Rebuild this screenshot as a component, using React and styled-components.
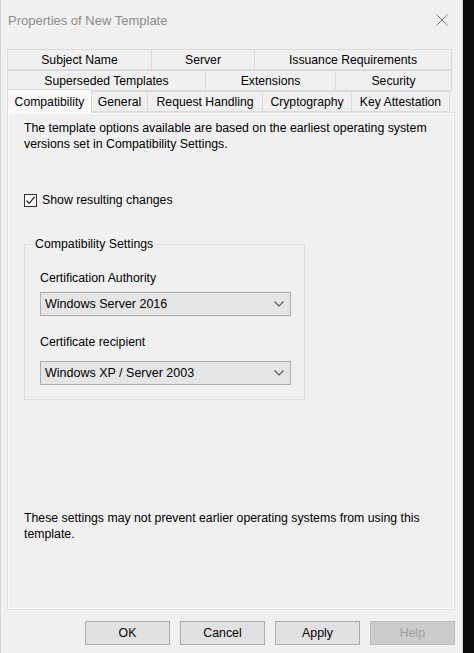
import React from 'react';
import styled, { createGlobalStyle } from 'styled-components';

const GlobalStyle = createGlobalStyle`
  html, body {
    margin: 0;
    padding: 0;
    background: #0b0b0b;
  }
  body {
    font-family: "Liberation Sans", Arial, sans-serif;
    font-size: 12px;
    color: #000;
  }
`;

const tabRows = [
  [
    { label: 'Subject Name', width: 145 },
    { label: 'Server', width: 104 },
    { label: 'Issuance Requirements', width: 198 },
  ],
  [
    { label: 'Superseded Templates', width: 199 },
    { label: 'Extensions', width: 131 },
    { label: 'Security', width: 117 },
  ],
  [
    { label: 'Compatibility', width: 85, active: true },
    { label: 'General', width: 57 },
    { label: 'Request Handling', width: 116 },
    { label: 'Cryptography', width: 90 },
    { label: 'Key Attestation', width: 99 },
  ],
];

const App = () => {
  return (
    <>
      <GlobalStyle />
      <Window>
        <TitleBar>
          <Title>Properties of New Template</Title>
          <CloseButton aria-label="Close">
            <svg width="12" height="12" viewBox="0 0 12 12">
              <path d="M0.5 0.5 L11.5 11.5 M11.5 0.5 L0.5 11.5" stroke="#7a7a7a" strokeWidth="1" fill="none" />
            </svg>
          </CloseButton>
        </TitleBar>

        <Body>
          <TabStrip>
            {tabRows.map((row, i) => (
              <TabRow key={i}>
                {row.map((tab) => (
                  <Tab key={tab.label} $width={tab.width} $active={tab.active}>
                    {tab.label}
                  </Tab>
                ))}
              </TabRow>
            ))}
          </TabStrip>

          <Panel>
            <Paragraph>
              The template options available are based on the earliest operating system
              <br />
              versions set in Compatibility Settings.
            </Paragraph>

            <CheckRow>
              <CheckBox>
                <svg width="11" height="11" viewBox="0 0 11 11">
                  <path d="M1.5 5.5 L4.2 8.3 L9.6 1.8" stroke="#222" strokeWidth="1.2" fill="none" />
                </svg>
              </CheckBox>
              Show resulting changes
            </CheckRow>

            <GroupBox>
              <Legend>Compatibility Settings</Legend>
              <FieldLabel $top={18}>Certification Authority</FieldLabel>
              <Select $top={6}>
                Windows Server 2016
                <Chevron />
              </Select>
              <FieldLabel $top={18}>Certificate recipient</FieldLabel>
              <Select $top={11}>
                Windows XP / Server 2003
                <Chevron />
              </Select>
            </GroupBox>

            <Note>
              These settings may not prevent earlier operating systems from using this
              <br />
              template.
            </Note>
          </Panel>

          <ButtonRow>
            <Button>OK</Button>
            <Button>Cancel</Button>
            <Button>Apply</Button>
            <Button disabled>Help</Button>
          </ButtonRow>
        </Body>
      </Window>
    </>
  );
};

const Chevron = () => (
  <ChevronIcon width="10" height="6" viewBox="0 0 10 6">
    <path d="M0.5 0.5 L5 5 L9.5 0.5" stroke="#555" strokeWidth="1.1" fill="none" />
  </ChevronIcon>
);

const Window = styled.div`
  width: 463px;
  height: 653px;
  background: #f0f0f0;
  border-left: 1px solid #d4d4d4;
  border-right: 1px solid #cfcfcf;
  display: flex;
  flex-direction: column;
  box-sizing: border-box;
`;

const TitleBar = styled.div`
  height: 40px;
  display: flex;
  align-items: center;
  justify-content: space-between;
  padding: 0 12px 0 7px;
  flex-shrink: 0;
`;

const Title = styled.span`
  font-size: 13px;
  color: #8c8c8c;
  padding-top: 1px;
`;

const CloseButton = styled.div`
  display: flex;
  align-items: center;
  justify-content: center;
  width: 16px;
  height: 16px;
`;

const Body = styled.div`
  flex: 1;
  display: flex;
  flex-direction: column;
  padding: 9px 7px 0 6px;
`;

const TabStrip = styled.div`
  display: flex;
  flex-direction: column;
  position: relative;
  z-index: 1;
`;

const TabRow = styled.div`
  display: flex;
  height: 21px;
  align-items: flex-end;
`;

const Tab = styled.div`
  width: ${(p) => p.$width}px;
  box-sizing: border-box;
  height: ${(p) => (p.$active ? '24px' : '21px')};
  margin-bottom: ${(p) => (p.$active ? '-1px' : '0')};
  display: flex;
  align-items: center;
  justify-content: center;
  border: 1px solid #dadada;
  border-bottom: ${(p) => (p.$active ? 'none' : '1px solid #dadada')};
  margin-left: -1px;
  background: ${(p) => (p.$active ? '#f9f9f9' : '#f0f0f0')};
  font-size: 12.2px;
  white-space: nowrap;
  padding-top: ${(p) => (p.$active ? '0' : '1px')};
  &:first-child {
    margin-left: 0;
  }
`;

const Panel = styled.div`
  height: 498px;
  box-sizing: border-box;
  border: 1px solid #dedede;
  box-shadow: inset 0 0 0 1px #fbfbfb;
  background: #f0f0f0;
  display: flex;
  flex-direction: column;
  padding: 7px 16px 0 16px;
`;

const Paragraph = styled.p`
  margin: 0;
  line-height: 16px;
  font-size: 12.3px;
`;

const CheckRow = styled.label`
  display: flex;
  align-items: center;
  gap: 5px;
  margin-top: 40px;
  height: 16px;
  font-size: 12.3px;
`;

const CheckBox = styled.span`
  width: 13px;
  height: 13px;
  box-sizing: border-box;
  border: 1px solid #333;
  background: #fff;
  display: flex;
  align-items: center;
  justify-content: center;
`;

const GroupBox = styled.fieldset`
  margin: 28px 0 0 0;
  width: 281px;
  box-sizing: border-box;
  border: 1px solid #dcdcdc;
  padding: 0 12px 14px 15px;
  min-inline-size: auto;
`;

const Legend = styled.legend`
  margin-left: -7px;
  padding: 0 2px;
  line-height: 16px;
  font-size: 12.3px;
`;

const FieldLabel = styled.div`
  margin-top: ${(p) => p.$top}px;
  line-height: 16px;
  font-size: 12.3px;
`;

const Select = styled.div`
  margin-top: ${(p) => p.$top}px;
  width: 251px;
  height: 24px;
  box-sizing: border-box;
  border: 1px solid #adadad;
  background: #e5e5e5;
  display: flex;
  align-items: center;
  justify-content: space-between;
  padding: 0 6px 0 4px;
  font-size: 12.5px;
`;

const ChevronIcon = styled.svg`
  flex-shrink: 0;
`;

const Note = styled.p`
  margin: auto 0 0 0;
  padding-bottom: 67px;
  line-height: 16px;
  font-size: 12.3px;
`;

const ButtonRow = styled.div`
  display: flex;
  justify-content: flex-end;
  gap: 10px;
  margin-top: 11px;
`;

const Button = styled.button`
  width: 85px;
  height: 24px;
  box-sizing: border-box;
  border: 1px solid ${(p) => (p.disabled ? '#bfbfbf' : '#adadad')};
  background: ${(p) => (p.disabled ? '#cccccc' : '#e1e1e1')};
  color: ${(p) => (p.disabled ? '#a0a0a0' : '#000')};
  font-family: "Liberation Sans", Arial, sans-serif;
  font-size: 12.3px;
  padding: 0;
`;

export default App;
